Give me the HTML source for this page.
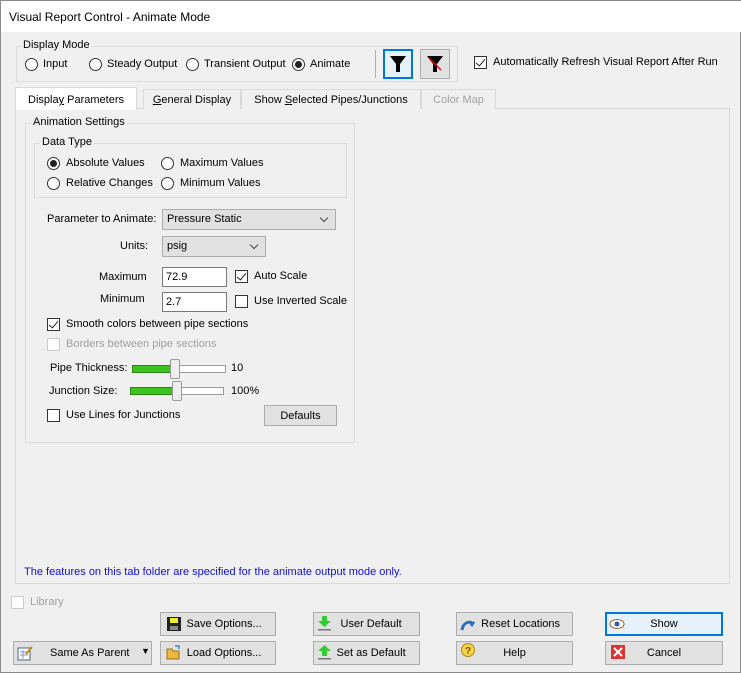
<!DOCTYPE html><html><head><style>
*{box-sizing:border-box}
body{margin:0;width:741px;height:673px;background:#f0f0f0;font-family:"Liberation Sans",sans-serif;font-size:11px;color:#000;position:relative;overflow:hidden;border:1px solid #8a8a8a}
.a{position:absolute;white-space:nowrap}
.grp{position:absolute;border:1px solid #dcdcdc}
.lg{position:absolute;background:#f0f0f0;padding:0 2px;top:-8px;left:5px}
.rb{position:absolute;width:13px;height:13px;border:1px solid #333;border-radius:50%;background:#fff}
.rb.on:after{content:"";position:absolute;left:2px;top:2px;width:7px;height:7px;border-radius:50%;background:#222}
.cb{position:absolute;width:13px;height:13px;border:1px solid #333;background:#fff}
.cb.on:after{content:"";position:absolute;left:3px;top:0px;width:4px;height:8px;border:solid #222;border-width:0 1.5px 1.5px 0;transform:rotate(40deg)}
.btn{position:absolute;border:1px solid #adadad;background:#e1e1e1;text-align:center;line-height:20px}
.inp{position:absolute;border:1px solid #7a7a7a;background:#fff;padding-left:3px;line-height:19px}
.sel{position:absolute;border:1px solid #adadad;background:#e1e1e1;padding-left:4px;line-height:19px}
.sel:after{content:"";position:absolute;right:8px;top:5px;width:5px;height:5px;border:solid #444;border-width:0 1px 1px 0;transform:rotate(45deg)}
.tab{position:absolute;top:88px;height:20px;border:1px solid #d9d9d9;border-bottom:none;background:#f0f0f0;text-align:center;line-height:20px}
.ico{position:absolute;width:16px;height:16px}
</style></head><body>
<div class="a" style="left:0;top:0;width:741px;height:31px;background:#fff"></div>
<div class="a" style="left:8px;top:9px;font-size:12px">Visual Report Control - Animate Mode</div>

<div class="grp" style="left:15px;top:45px;width:442px;height:36px"><span class="lg" style="top:-8px;left:4px">Display Mode</span></div>
<div class="rb" style="left:24px;top:57px"></div><div class="a" style="left:42px;top:57px">Input</div>
<div class="rb" style="left:88px;top:57px"></div><div class="a" style="left:106px;top:57px">Steady Output</div>
<div class="rb" style="left:185px;top:57px"></div><div class="a" style="left:203px;top:57px">Transient Output</div>
<div class="rb on" style="left:291px;top:57px"></div><div class="a" style="left:309px;top:57px">Animate</div>
<div class="a" style="left:374px;top:49px;width:1px;height:28px;background:#b0b0b0"></div>
<div class="a" style="left:382px;top:48px;width:30px;height:30px;border:2px solid #0078d7;background:#e5f1fb"></div>
<svg class="a" style="left:388px;top:54px" width="18" height="18"><path d="M1 1H17L11 9V17H7V9Z" fill="#000"/></svg>
<div class="a" style="left:419px;top:48px;width:30px;height:30px;border:1px solid #adadad;background:#e1e1e1"></div>
<svg class="a" style="left:425px;top:54px" width="18" height="18"><path d="M1 1H17L11 9V17H7V9Z" fill="#000"/><path d="M3 3L15 15" stroke="#e00" stroke-width="1.5"/></svg>
<div class="cb on" style="left:473px;top:55px"></div><div class="a" style="left:492px;top:55px">Automatically Refresh Visual Report After Run</div>

<div class="a" style="left:14px;top:107px;width:715px;height:476px;border:1px solid #d9d9d9;background:#f0f0f0"></div>
<div class="tab" style="left:142px;width:98px"><u>G</u>eneral Display</div>
<div class="tab" style="left:240px;width:180px">Show <u>S</u>elected Pipes/Junctions</div>
<div class="tab" style="left:420px;width:75px;color:#a0a0a0">Color Map</div>
<div class="tab" style="left:14px;top:86px;width:122px;height:23px;background:#fff;line-height:24px">Displa<u>y</u> Parameters</div>

<div class="grp" style="left:24px;top:122px;width:330px;height:320px"><span class="lg">Animation Settings</span></div>
<div class="grp" style="left:33px;top:142px;width:313px;height:55px"><span class="lg">Data Type</span></div>
<div class="rb on" style="left:46px;top:156px"></div><div class="a" style="left:65px;top:156px">Absolute Values</div>
<div class="rb" style="left:160px;top:156px"></div><div class="a" style="left:179px;top:156px">Maximum Values</div>
<div class="rb" style="left:46px;top:176px"></div><div class="a" style="left:65px;top:176px">Relative Changes</div>
<div class="rb" style="left:160px;top:176px"></div><div class="a" style="left:179px;top:176px">Minimum Values</div>

<div class="a" style="left:46px;top:212px">Parameter to Animate:</div>
<div class="sel" style="left:161px;top:208px;width:174px;height:21px">Pressure Static</div>
<div class="a" style="left:119px;top:239px">Units:</div>
<div class="sel" style="left:161px;top:235px;width:104px;height:21px">psig</div>
<div class="a" style="left:98px;top:270px">Maximum</div>
<div class="inp" style="left:161px;top:266px;width:65px;height:20px">72.9</div>
<div class="cb on" style="left:234px;top:269px"></div><div class="a" style="left:253px;top:269px">Auto Scale</div>
<div class="a" style="left:99px;top:292px">Minimum</div>
<div class="inp" style="left:161px;top:291px;width:65px;height:20px">2.7</div>
<div class="cb" style="left:234px;top:294px"></div><div class="a" style="left:253px;top:294px">Use Inverted Scale</div>
<div class="cb on" style="left:46px;top:317px"></div><div class="a" style="left:65px;top:317px">Smooth colors between pipe sections</div>
<div class="cb" style="left:46px;top:337px;border-color:#ccc"></div><div class="a" style="left:65px;top:337px;color:#a0a0a0">Borders between pipe sections</div>
<div class="a" style="left:49px;top:361px">Pipe Thickness:</div>
<div class="a" style="left:131px;top:364px;width:94px;height:8px;border:1px solid #999;background:#fff"></div>
<div class="a" style="left:131px;top:364px;width:42px;height:8px;background:#3bc31e;border:1px solid #2a8a15"></div>
<div class="a" style="left:169px;top:358px;width:10px;height:20px;border:1px solid #999;background:#eee;border-radius:2px"></div>
<div class="a" style="left:230px;top:361px">10</div>
<div class="a" style="left:48px;top:384px">Junction Size:</div>
<div class="a" style="left:129px;top:386px;width:94px;height:8px;border:1px solid #999;background:#fff"></div>
<div class="a" style="left:129px;top:386px;width:45px;height:8px;background:#3bc31e;border:1px solid #2a8a15"></div>
<div class="a" style="left:171px;top:380px;width:10px;height:20px;border:1px solid #999;background:#eee;border-radius:2px"></div>
<div class="a" style="left:230px;top:384px">100%</div>
<div class="cb" style="left:46px;top:408px"></div><div class="a" style="left:65px;top:408px">Use Lines for Junctions</div>
<div class="btn" style="left:263px;top:404px;width:73px;height:21px">Defaults</div>

<div class="a" style="left:23px;top:565px;color:#1010d0">The features on this tab folder are specified for the animate output mode only.</div>

<div class="cb" style="left:10px;top:595px;border-color:#ccc"></div><div class="a" style="left:29px;top:595px;color:#a0a0a0">Library</div>

<div class="btn" style="left:159px;top:611px;width:116px;height:24px;line-height:22px">&nbsp;&nbsp;&nbsp;&nbsp;Save Options...</div>
<svg class="ico" style="left:165px;top:615px"><rect x="1" y="1" width="14" height="14" fill="#222"/><rect x="4" y="2" width="8" height="5" fill="#ee3"/><rect x="4" y="10" width="8" height="4" fill="#888"/></svg>
<div class="btn" style="left:159px;top:640px;width:116px;height:24px;line-height:22px">&nbsp;&nbsp;&nbsp;&nbsp;Load Options...</div>
<svg class="ico" style="left:165px;top:643px"><path d="M1 5H6L7 7H13V15H1Z" fill="#e8b840" stroke="#a07010"/><path d="M9 2L13 2V5" stroke="#38c" fill="none" stroke-width="1.5"/></svg>
<div class="btn" style="left:12px;top:640px;width:139px;height:24px;line-height:22px"></div>
<div class="a" style="left:49px;top:646px">Same As Parent</div><div class="a" style="left:140px;top:645px;font-size:9px">▼</div>
<svg class="ico" style="left:16px;top:644px"><rect x="1" y="3" width="12" height="12" fill="#fff" stroke="#468"/><path d="M3 7H11M3 10H11M6 5V14" stroke="#89b"/><path d="M9 9L15 2" stroke="#c80" stroke-width="2"/></svg>
<div class="btn" style="left:312px;top:611px;width:107px;height:24px;line-height:22px">&nbsp;&nbsp;&nbsp;User Default</div>
<svg class="ico" style="left:316px;top:614px"><path d="M5 1H10V6H14L7.5 12L1 6H5Z" fill="#3c3"/><rect x="1" y="14" width="13" height="1.5" fill="#777"/></svg>
<div class="btn" style="left:312px;top:640px;width:107px;height:24px;line-height:22px">&nbsp;&nbsp;&nbsp;Set as Default</div>
<svg class="ico" style="left:316px;top:643px"><path d="M5 12H10V7H14L7.5 1L1 7H5Z" fill="#3c3"/><rect x="1" y="14" width="13" height="1.5" fill="#777"/></svg>
<div class="btn" style="left:455px;top:611px;width:117px;height:24px;line-height:22px">&nbsp;&nbsp;&nbsp;&nbsp;Reset Locations</div>
<svg class="ico" style="left:459px;top:615px"><path d="M2 14C3 7 8 5 13 7L11 10" stroke="#2a6fc0" stroke-width="3" fill="none"/></svg>
<div class="btn" style="left:455px;top:640px;width:117px;height:24px;line-height:22px">Help</div>
<svg class="ico" style="left:459px;top:642px"><circle cx="8" cy="7" r="6.5" fill="#f4d24a" stroke="#b08a10"/><text x="5" y="11" font-size="10" font-family="Liberation Sans" font-weight="bold" fill="#7a5a00">?</text></svg>
<div class="btn" style="left:604px;top:611px;width:118px;height:24px;line-height:20px;border:2px solid #0078d7;background:#e5f1fb">Show</div>
<svg class="ico" style="left:608px;top:615px"><ellipse cx="8" cy="8" rx="7" ry="4.5" fill="#fff" stroke="#a06020"/><circle cx="8" cy="8" r="2.5" fill="#2a5fb0"/></svg>
<div class="btn" style="left:604px;top:640px;width:118px;height:24px;line-height:22px">Cancel</div>
<svg class="ico" style="left:609px;top:643px"><rect x="1" y="1" width="14" height="14" fill="#d33"/><path d="M4 4L12 12M12 4L4 12" stroke="#fff" stroke-width="2"/></svg>
</body></html>
